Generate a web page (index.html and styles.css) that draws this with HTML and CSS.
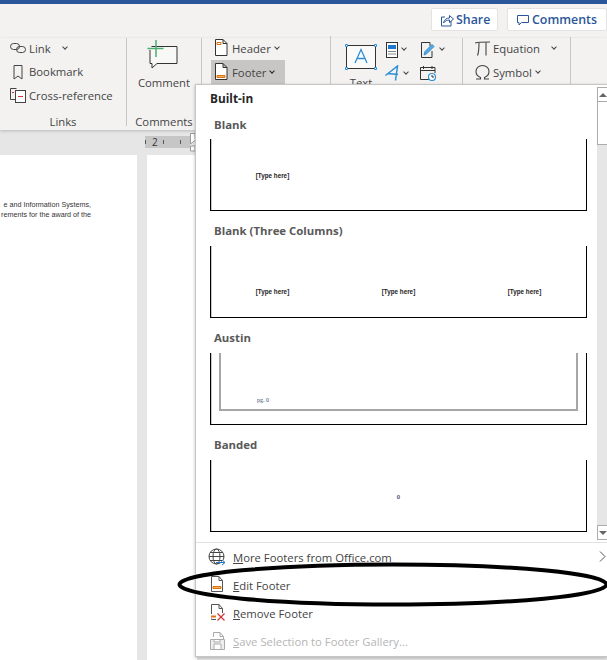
FILE: index.html
```html
<!DOCTYPE html>
<html lang="en">
<head>
<meta charset="utf-8">
<title>Word footer menu</title>
<link rel="stylesheet" href="styles.css">
</head>
<body>
<div class="app">
  <div class="topbar"></div>
  <div class="actions">
    <button class="action">
      <svg class="ic14" viewBox="0 0 14 14"><path d="M5 4H1.500V13H11V8" fill="none" stroke="#2b579a"/><path d="M3.500 10C4 6.500 7 5 9.500 5V2.500L13.500 6 9.500 9.500V7C7 7 5 8 3.500 10Z" fill="#fff" stroke="#2b579a"/></svg>
      <span>Share</span>
    </button>
    <button class="action comments">
      <svg class="ic14" viewBox="0 0 14 14"><path d="M1.500 2.500H12.500V9.500H5.500L3 12V9.500H1.500Z" fill="none" stroke="#2b579a"/></svg>
      <span>Comments</span>
    </button>
  </div>
  <div class="ribbon">
    <section class="group links">
      <div class="stack">
        <div class="tool"><svg class="ic16" viewBox="0 0 16 16"><rect x="0.500" y="3.500" width="9" height="6" rx="3" fill="none" stroke="#444"/><rect x="6.500" y="6.500" width="9" height="6" rx="3" fill="none" stroke="#444"/></svg><span>Link</span><i class="chev far"></i></div>
        <div class="tool"><svg class="ic16" viewBox="0 0 16 16"><path d="M4 1.500H12V15L8 12 4 15Z" fill="none" stroke="#444"/></svg><span>Bookmark</span></div>
        <div class="tool"><svg class="ic16" viewBox="0 0 16 16"><path d="M6.500 12.500H.5V1.500H6.500" fill="none" stroke="#444"/><rect x="5.500" y="3.500" width="10" height="12" fill="#fff" stroke="#444"/><path d="M8 9.500H13M2 5.500H4" stroke="#d13438"/></svg><span>Cross-reference</span></div>
      </div>
      <div class="label">Links</div>
    </section>
    <section class="group comment-group">
      <svg class="ic-comment" viewBox="0 0 30 30"><path d="M4 6.500H29.500V23.500H9.500L4.500 28V23.500H2.500V10" fill="#f8f8f7" stroke="#333"/><path d="M8.500 0V17M0 8.500H16" stroke="#4caf70" stroke-width="1.500"/></svg>
      <div class="big-label">Comment</div>
      <div class="label">Comments</div>
    </section>
    <section class="group hf">
      <div class="tool hf-tool"><svg class="ic-page" viewBox="0 0 14 18"><path d="M1.500 .5H9L13 4.500V16.500H1.500Z M9 .5V4.500H13" fill="#fff" stroke="#333"/><path d="M3 3.500H7V5.500H3Z" fill="#fff" stroke="#d9730d"/></svg><span>Header</span><i class="chev"></i></div>
      <div class="tool hf-tool active"><svg class="ic-page" viewBox="0 0 14 18"><path d="M1.500 .5H9L13 4.500V16.500H1.500Z M9 .5V4.500H13" fill="#fff" stroke="#333"/><path d="M3 12.500H11V14.500H3Z" fill="#f5b26b" stroke="#d9730d"/></svg><span>Footer</span><i class="chev dark"></i></div>
    </section>
    <section class="group text-group">
      <div class="text-col">
        <svg class="ic-text" viewBox="0 0 32 26"><rect x="1.500" y="1.500" width="29" height="23" fill="#fafafa" stroke="#333"/><path d="M10 19L16 5.500 22 19M12 14.500H20" fill="none" stroke="#2e8fd6" stroke-width="1.300"/><path d="M.5 .5h2v2h-2zM29.500 .5h2v2h-2zM.5 23.500h2v2h-2zM29.500 23.500h2v2h-2z" fill="#fff" stroke="#2e8fd6"/></svg>
        <div class="text-label">Text</div>
      </div>
      <div class="text-tools">
        <div class="mini"><svg class="ic-mini" viewBox="0 0 12 16"><rect x=".5" y=".5" width="11" height="15" fill="#fff" stroke="#333"/><rect x="2" y="3" width="8" height="4" fill="#1f77c9"/><path d="M2 9.500H10M2 12H10" stroke="#888"/></svg><i class="chev"></i></div>
        <div class="mini"><svg class="ic-mini2" viewBox="0 0 16 16"><path d="M10 .5H1.500V15.500H12V9M10 .5V4" fill="none" stroke="#333"/><path d="M4 13L5 9.500 12 2.500 14 4.500 7 11.500Z" fill="#5aa7e0" stroke="#2e8fd6"/></svg><i class="chev"></i></div>
        <div class="mini"><svg class="ic-mini2" viewBox="0 0 14 16"><path d="M.5 10.500L12.500 1 10.500 15.500M3 8.500L13 9.500" fill="none" stroke="#2e8fd6" stroke-width="1.500"/></svg><i class="chev"></i></div>
        <div class="mini"><svg class="ic-mini2" viewBox="0 0 16 16"><path d="M9 14.500H.5V2.500H15V8M.5 5.500H15M3.500 1V4M12 1V4" fill="none" stroke="#333"/><circle cx="12" cy="12" r="3.500" fill="#fff" stroke="#2e8fd6" stroke-width="1.200"/><path d="M12 10V12H14" fill="none" stroke="#333"/></svg></div>
      </div>
    </section>
    <section class="group symbols">
      <div class="tool sym-tool"><svg class="ic-sym" viewBox="0 0 15 16"><path d="M0 2C3 1 11 1 15 1M4 1.500C4 6 4 11 2.500 14.500M11 1.500V14.500" fill="none" stroke="#444" stroke-width="1.100"/></svg><span>Equation</span><i class="chev wide"></i></div>
      <div class="tool sym-tool"><svg class="ic-sym" viewBox="0 0 15 16"><path d="M1 15H5.500V13.500C3 12.500 1 10 1 7.500 1 4 4 1.500 7.500 1.500S14 4 14 7.500C14 10 12 12.500 9.500 13.500V15H14" fill="none" stroke="#444" stroke-width="1.100"/></svg><span>Symbol</span><i class="chev"></i></div>
    </section>
  </div>
  <div class="ruler">
    <div class="ruler-band"><span class="tick"></span><span class="num">2</span><span class="tick"></span><span class="tick end"></span></div>
    <svg class="marker" viewBox="0 0 6 24"><path d="M.5 .5H5V5L5.500 7 .5 11ZM.5 13H5V18H.5Z" fill="#fff" stroke="#999"/></svg>
  </div>
  <div class="document">
    <div class="page">
      <p>e and Information Systems,<br>rements for the award of the</p>
    </div>
    <div class="page second"></div>
  </div>
</div>

<div class="menu">
  <div class="gallery">
    <div class="gallery-list">
      <h2>Built-in</h2>
      <h3>Blank</h3>
      <div class="preview cols"><span class="ph">[Type here]</span></div>
      <h3>Blank (Three Columns)</h3>
      <div class="preview cols low"><span class="ph">[Type here]</span><span class="ph">[Type here]</span><span class="ph">[Type here]</span></div>
      <h3>Austin</h3>
      <div class="preview austin"><div class="austin-inner"><span class="pg">pg. 0</span></div></div>
      <h3>Banded</h3>
      <div class="preview banded"><span class="zero">0</span></div>
    </div>
    <div class="scrollbar">
      <div class="sb-btn"><i class="tri up"></i></div>
      <div class="sb-thumb"></div>
      <div class="sb-track"></div>
      <div class="sb-btn"><i class="tri down"></i></div>
    </div>
  </div>
  <ul class="items">
    <li class="item"><svg class="ic-item" viewBox="0 0 18 18"><circle cx="8.500" cy="8.500" r="7.500" fill="none" stroke="#444"/><ellipse cx="8.500" cy="8.500" rx="3.500" ry="7.500" fill="none" stroke="#444"/><path d="M1 8.500H16M2 4.500H15M2 12.500H15" stroke="#444"/><path d="M8 14.500H17M14 12L17 14.500 14 17" fill="#fff" stroke="#1f77c9"/></svg><span><u>M</u>ore Footers from Office.com</span><svg class="more" viewBox="0 0 7 11"><path d="M1 .5L6 5.500 1 10.500" fill="none" stroke="#555"/></svg></li>
    <li class="item"><svg class="ic-item" viewBox="0 0 18 18"><path d="M3.500 .5H11L14.500 4.500V15.500H3.500Z M11 .5V4.500H14.500" fill="#fff" stroke="#555"/><path d="M5 10.500H13V12.500H5Z" fill="#f5b26b" stroke="#d9730d"/></svg><span><u>E</u>dit Footer</span></li>
    <li class="item"><svg class="ic-item" viewBox="0 0 18 18"><path d="M3.500 10V.5H11L14.500 4.500V9M11 .5V4.500H14.500M3.500 14.500V15.500H8" fill="none" stroke="#555"/><path d="M3 12.500H8" stroke="#d9730d" stroke-width="2"/><path d="M9.500 9.500L16.500 16.500M16.500 9.500L9.500 16.500" stroke="#d13438" stroke-width="1.200"/></svg><span><u>R</u>emove Footer</span></li>
    <li class="item disabled"><svg class="ic-item" viewBox="0 0 18 18"><path d="M5.500 5V.5H12L15.500 4.500V8M12 .5V4.500H15.500" fill="#fff" stroke="#aaa"/><path d="M2.500 7.500H16.500V17.500H2.500Z" fill="#eee" stroke="#aaa"/><path d="M6 17V12H13V17M6 8V10H12V8" fill="#fff" stroke="#aaa"/></svg><span><u>S</u>ave Selection to Footer Gallery...</span></li>
  </ul>
</div>

<svg class="scribble" viewBox="0 0 607 660"><ellipse cx="393" cy="584.500" rx="213.500" ry="20" fill="none" stroke="#000" stroke-width="4"/></svg>
</body>
</html>
```

FILE: styles.css
```css
* { box-sizing: border-box; }
html, body { margin: 0; height: 660px; overflow: hidden; }
body { position: relative; width: 607px; font-family: "Open Sans", "Noto Sans", sans-serif; font-size: 11.300px; color: #444; background: #e6e6e6; }
svg { display: block; flex: none; }

.app { display: flex; flex-direction: column; height: 660px; }
.topbar { height: 4px; background: #2b579a; }

.actions { height: 34px; padding-top: 4px; display: flex; gap: 9px; justify-content: flex-end; background: #f3f2f1; flex: none; overflow: hidden; }
.action { display: flex; align-items: center; gap: 2px; height: 23px; width: 67px; padding: 0 0 0 8px; margin: 0; border: 1px solid #e4e3e2; border-radius: 2px; background: #fff; color: #2b579a; font: 600 12.400px "Open Sans", sans-serif; white-space: nowrap; }
.comments { width: 100px; }
.ic14 { width: 14px; height: 14px; }

.ribbon { height: 92px; display: flex; background: #f3f2f1; padding-bottom: 4px; box-shadow: 0 1px 3px rgba(0,0,0,.2); position: relative; flex: none; }
.group { position: relative; border-right: 1px solid #c8c6c4; height: 88px; flex: none; }
.links { width: 127px; padding-left: 10px; display: flex; flex-direction: column; }
.comment-group { width: 75px; display: flex; flex-direction: column; align-items: center; }
.hf { width: 129px; padding: 0 0 0 9px; display: flex; flex-direction: column; margin-top: -2px; height: 90px; }
.text-group { width: 132px; padding: 6px 0 0 14px; display: flex; }
.symbols { width: 108px; padding: 0 0 0 12px; display: flex; flex-direction: column; margin-top: -1px; height: 89px; }

.stack { display: flex; flex-direction: column; margin-top: -1.500px; }
.tool { display: flex; align-items: center; gap: 3px; height: 23.500px; white-space: nowrap; }
.ic16 { width: 16px; height: 16px; }
.label { position: absolute; left: 0; right: 0; bottom: -6px; height: 20px; text-align: center; line-height: 20px; }

.chev { display: inline-block; width: 4px; height: 4px; border-right: 1px solid #444; border-bottom: 1px solid #444; transform: rotate(45deg); margin: -3px 0 0 1px; flex: none; }
.chev.far { margin-left: 9px; }
.chev.wide { margin-left: 9px; }
.chev.dark { border-color: #222; }

.ic-comment { width: 31px; height: 30px; margin: 2px 0 0 -4px; }
.big-label { margin-top: 4px; line-height: 18px; }

.hf-tool { height: 24px; width: 74px; padding-left: 3px; gap: 4px; }
.hf-tool .chev { margin-left: 0; }
.hf-tool.active { background: #c8c6c4; }
.ic-page { width: 14px; height: 18px; }

.text-col { width: 32px; display: flex; flex-direction: column; align-items: center; }
.ic-text { width: 32px; height: 26px; }
.text-label { margin-top: 5px; line-height: 16px; }
.text-tools { display: grid; grid-template-columns: 36px 30px; grid-auto-rows: 23.500px; margin: -6px 0 0 9px; }
.mini { display: flex; align-items: center; gap: 3px; }
.ic-mini { width: 12px; height: 16px; }
.ic-mini2 { width: 16px; height: 16px; margin-left: -2px; }

.ic-sym { width: 15px; height: 16px; }

.ruler { height: 25px; padding: 6px 0 0 145px; display: flex; flex: none; background: #e6e6e6; }
.ruler-band { width: 45px; height: 12px; background: #c6c6c6; display: flex; align-items: center; font-size: 10px; color: #333; }
.tick { width: 1px; height: 4px; background: #555; flex: none; }
.num { margin: 0 5px 0 6px; }
.tick.end { margin-left: 16px; }
.marker { width: 6px; height: 24px; margin-top: -3px; }

.document { flex: 1; display: flex; gap: 10px; overflow: hidden; background: #e6e6e6; }
.page { width: 137px; flex: none; display: flex; justify-content: flex-end; background: #fff; font-family: "Liberation Sans", sans-serif; font-size: 7.200px; line-height: 10px; color: #333; text-align: right; padding: 45px 46px 0 0; overflow: hidden; }
.page p { margin: 0; white-space: nowrap; }
.page.second { width: 50px; padding: 0; }

.menu { position: absolute; left: 195px; top: 84px; width: 412px; height: 573px; background: #fff; border: 1px solid #c8c6c4; border-right: 0; box-shadow: 0 1px 3px rgba(0,0,0,.25); display: flex; flex-direction: column; }
.gallery { height: 458px; display: flex; border-bottom: 1px solid #e1e1e1; flex: none; }
.gallery-list { width: 401px; padding: 3px 0 0 14px; overflow: hidden; }
h2 { margin: 0; font-size: 11.800px; font-weight: 700; color: #262626; line-height: 20px; }
h3 { margin: 0; height: 35px; padding: 10px 0 0 4px; font-size: 11.400px; font-weight: 700; color: #595959; line-height: 20px; }
.gallery-list h2 + h3 { height: 31px; padding-top: 7px; }
.preview { width: 377px; height: 72px; border: solid #000; border-width: 0 1px 1px 1px; box-shadow: inset 1px 0 0 #c8c8c8; font-family: "Liberation Sans", sans-serif; }
.cols { display: grid; grid-template-columns: repeat(3, 126px); align-items: start; padding-top: 33px; }
.cols.low { padding-top: 42px; }
.ph { font-size: 6.300px; font-weight: 700; line-height: 8px; color: #222; text-align: center; white-space: nowrap; margin-left: -3px; }
.austin { padding: 0 8px 0 8px; }
.austin-inner { height: 58px; border: solid #a6a6a6; border-width: 0 2px 2px 2px; padding: 43px 0 0 36px; }
.pg { display: block; font: 6px/8px "Liberation Serif", serif; color: #2f4a7a; }
.banded { text-align: center; padding: 33px 0 0 0; }
.zero { font-size: 6px; font-weight: 700; color: #44546a; line-height: 8px; display: block; }

.scrollbar { width: 10px; margin-top: 2px; height: 453px; display: flex; flex-direction: column; flex: none; }
.sb-btn { height: 15px; border: 1px solid #ababab; border-right: 0; background: #fff; display: flex; align-items: center; justify-content: center; flex: none; }
.sb-thumb { height: 43px; border: 1px solid #ababab; border-top: 0; border-right: 0; background: #fff; flex: none; }
.sb-track { flex: 1; background: #e6e6e6; }
.tri { width: 0; height: 0; border-left: 4px solid transparent; border-right: 4px solid transparent; }
.tri.up { border-bottom: 4px solid #666; }
.tri.down { border-top: 4px solid #666; }

.items { list-style: none; margin: 0; padding: 0; }
.item { position: relative; height: 28px; display: flex; align-items: center; padding-left: 12px; gap: 7px; white-space: nowrap; color: #444; }
.ic-item { width: 18px; height: 18px; }
.more { width: 7px; height: 11px; position: absolute; right: 1px; top: 8px; }
.item.disabled { color: #b5b5b5; }

.scribble { position: absolute; left: 0; top: 0; width: 607px; height: 660px; pointer-events: none; }
```
